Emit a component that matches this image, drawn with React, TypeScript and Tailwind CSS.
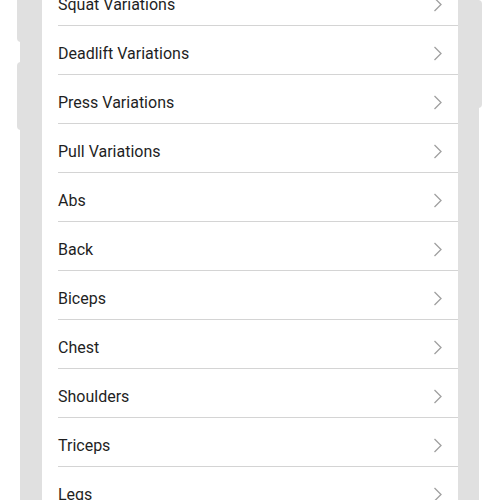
const GROUPS = [
  'Squat Variations',
  'Deadlift Variations',
  'Press Variations',
  'Pull Variations',
  'Abs',
  'Back',
  'Biceps',
  'Chest',
  'Shoulders',
  'Triceps',
  'Legs',
  'Forearms',
];

function Row({ label }: { label: string }) {
  return (
    <div className="pl-4">
      <div className="flex items-center justify-between border-b border-[#d4d4d4] pt-4 pb-2 pr-[15px]">
        <span className="text-[16px] leading-6 text-[#1f1f1f]">{label}</span>
        <svg width="10" height="24" viewBox="0 0 10 24" className="text-[#a0a0a0]">
          <polyline points="1.5,18 8,11.5 1.5,5" fill="none" stroke="currentColor" strokeWidth="1.3" />
        </svg>
      </div>
    </div>
  );
}

export default function App() {
  return (
    <div
      className="relative h-[500px] w-[500px] overflow-hidden bg-white"
      style={{ fontFamily: 'Roboto, "Liberation Sans", sans-serif' }}
    >
      {/* side buttons */}
      <div className="absolute left-[17px] top-0 h-[42px] w-[4px] rounded-bl-sm bg-[#e0e0e0]" />
      <div className="absolute left-[17px] top-[62px] h-[68px] w-[4px] rounded-l-sm bg-[#e0e0e0]" />
      <div className="absolute left-[478px] top-0 h-[108px] w-[4px] rounded-r-sm bg-[#e0e0e0]" />

      <div className="ml-[20px] flex h-full w-[459px] bg-[#e0e0e0] pl-[22px] pr-[21px]">
        <div className="h-full flex-1 overflow-hidden bg-white">
          <div className="-mt-[23px]">
            {GROUPS.map((g) => (
              <Row key={g} label={g} />
            ))}
          </div>
        </div>
      </div>
    </div>
  );
}
